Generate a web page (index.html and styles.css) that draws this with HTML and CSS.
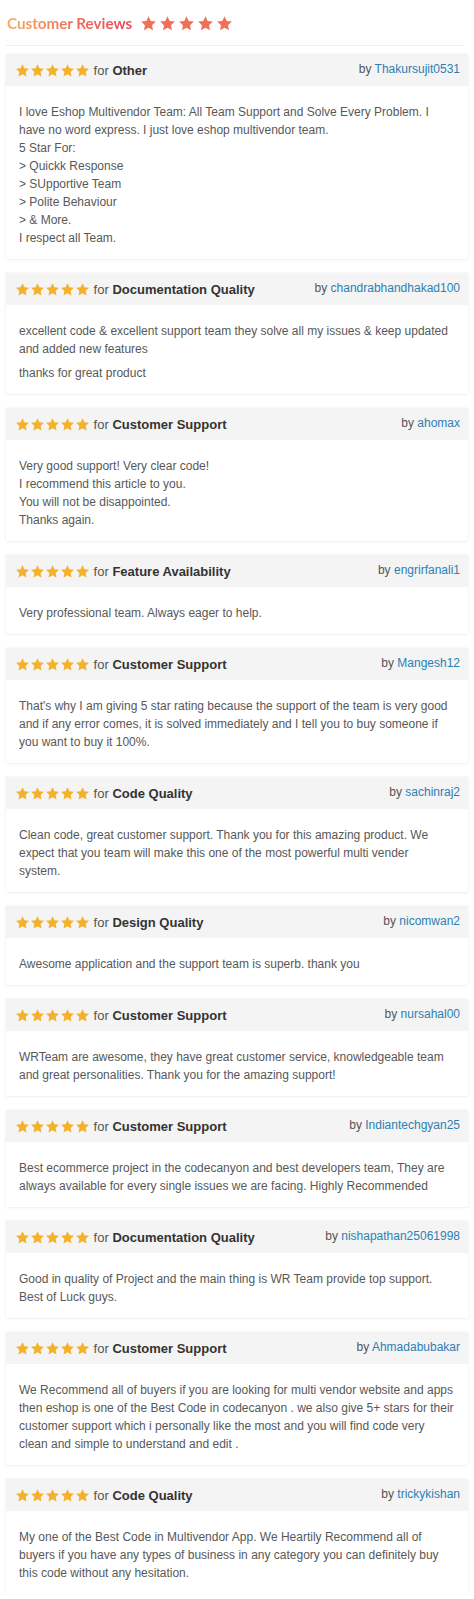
FILE: index.html
```html
<!DOCTYPE html>
<html>
<head>
<meta charset="utf-8">
<link rel="stylesheet" href="styles.css">
</head>
<body>
<svg width="0" height="0" class="defs">
  <defs>
    <symbol id="star" viewBox="0 0 24 24"><path d="M12 1.8l3.1 6.6 7.2.9-5.3 5 1.4 7.1L12 17.9l-6.4 3.5 1.4-7.1-5.3-5 7.2-.9z"/></symbol>
  </defs>
</svg>
<div class="page">
  <div class="title-row">
    <h1 class="title">Customer Reviews</h1>
    <div class="title-stars">
      <svg><use href="#star"/></svg><svg><use href="#star"/></svg><svg><use href="#star"/></svg><svg><use href="#star"/></svg><svg><use href="#star"/></svg>
    </div>
  </div>

  <div class="reviews">
    <div class="card">
      <div class="card-head">
        <div class="rating"><span class="stars"><svg><use href="#star"/></svg><svg><use href="#star"/></svg><svg><use href="#star"/></svg><svg><use href="#star"/></svg><svg><use href="#star"/></svg></span> for <b>Other</b></div>
        <div class="by">by <a>Thakursujit0531</a></div>
      </div>
      <div class="card-body"><p>I love Eshop Multivendor Team: All Team Support and Solve Every Problem. I have no word express. I just love eshop multivendor team.<br>5 Star For:<br>&gt; Quickk Response<br>&gt; SUpportive Team<br>&gt; Polite Behaviour<br>&gt; &amp; More.<br>I respect all Team.</p></div>
    </div>

    <div class="card">
      <div class="card-head">
        <div class="rating"><span class="stars"><svg><use href="#star"/></svg><svg><use href="#star"/></svg><svg><use href="#star"/></svg><svg><use href="#star"/></svg><svg><use href="#star"/></svg></span> for <b>Documentation Quality</b></div>
        <div class="by">by <a>chandrabhandhakad100</a></div>
      </div>
      <div class="card-body"><p>excellent code &amp; excellent support team they solve all my issues &amp; keep updated and added new features</p><p>thanks for great product</p></div>
    </div>

    <div class="card">
      <div class="card-head">
        <div class="rating"><span class="stars"><svg><use href="#star"/></svg><svg><use href="#star"/></svg><svg><use href="#star"/></svg><svg><use href="#star"/></svg><svg><use href="#star"/></svg></span> for <b>Customer Support</b></div>
        <div class="by">by <a>ahomax</a></div>
      </div>
      <div class="card-body"><p>Very good support! Very clear code!<br>I recommend this article to you.<br>You will not be disappointed.<br>Thanks again.</p></div>
    </div>

    <div class="card">
      <div class="card-head">
        <div class="rating"><span class="stars"><svg><use href="#star"/></svg><svg><use href="#star"/></svg><svg><use href="#star"/></svg><svg><use href="#star"/></svg><svg><use href="#star"/></svg></span> for <b>Feature Availability</b></div>
        <div class="by">by <a>engrirfanali1</a></div>
      </div>
      <div class="card-body"><p>Very professional team. Always eager to help.</p></div>
    </div>

    <div class="card">
      <div class="card-head">
        <div class="rating"><span class="stars"><svg><use href="#star"/></svg><svg><use href="#star"/></svg><svg><use href="#star"/></svg><svg><use href="#star"/></svg><svg><use href="#star"/></svg></span> for <b>Customer Support</b></div>
        <div class="by">by <a>Mangesh12</a></div>
      </div>
      <div class="card-body"><p>That's why I am giving 5 star rating because the support of the team is very good and if any error comes, it is solved immediately and I tell you to buy someone if you want to buy it 100%.</p></div>
    </div>

    <div class="card">
      <div class="card-head">
        <div class="rating"><span class="stars"><svg><use href="#star"/></svg><svg><use href="#star"/></svg><svg><use href="#star"/></svg><svg><use href="#star"/></svg><svg><use href="#star"/></svg></span> for <b>Code Quality</b></div>
        <div class="by">by <a>sachinraj2</a></div>
      </div>
      <div class="card-body"><p>Clean code, great customer support. Thank you for this amazing product. We expect that you team will make this one of the most powerful multi vender<br>system.</p></div>
    </div>

    <div class="card">
      <div class="card-head">
        <div class="rating"><span class="stars"><svg><use href="#star"/></svg><svg><use href="#star"/></svg><svg><use href="#star"/></svg><svg><use href="#star"/></svg><svg><use href="#star"/></svg></span> for <b>Design Quality</b></div>
        <div class="by">by <a>nicomwan2</a></div>
      </div>
      <div class="card-body"><p>Awesome application and the support team is superb. thank you</p></div>
    </div>

    <div class="card">
      <div class="card-head">
        <div class="rating"><span class="stars"><svg><use href="#star"/></svg><svg><use href="#star"/></svg><svg><use href="#star"/></svg><svg><use href="#star"/></svg><svg><use href="#star"/></svg></span> for <b>Customer Support</b></div>
        <div class="by">by <a>nursahal00</a></div>
      </div>
      <div class="card-body"><p>WRTeam are awesome, they have great customer service, knowledgeable team and great personalities. Thank you for the amazing support!</p></div>
    </div>

    <div class="card">
      <div class="card-head">
        <div class="rating"><span class="stars"><svg><use href="#star"/></svg><svg><use href="#star"/></svg><svg><use href="#star"/></svg><svg><use href="#star"/></svg><svg><use href="#star"/></svg></span> for <b>Customer Support</b></div>
        <div class="by">by <a>Indiantechgyan25</a></div>
      </div>
      <div class="card-body"><p>Best ecommerce project in the codecanyon and best developers team, They are always available for every single issues we are facing. Highly Recommended</p></div>
    </div>

    <div class="card">
      <div class="card-head">
        <div class="rating"><span class="stars"><svg><use href="#star"/></svg><svg><use href="#star"/></svg><svg><use href="#star"/></svg><svg><use href="#star"/></svg><svg><use href="#star"/></svg></span> for <b>Documentation Quality</b></div>
        <div class="by">by <a>nishapathan25061998</a></div>
      </div>
      <div class="card-body"><p>Good in quality of Project and the main thing is WR Team provide top support. Best of Luck guys.</p></div>
    </div>

    <div class="card">
      <div class="card-head">
        <div class="rating"><span class="stars"><svg><use href="#star"/></svg><svg><use href="#star"/></svg><svg><use href="#star"/></svg><svg><use href="#star"/></svg><svg><use href="#star"/></svg></span> for <b>Customer Support</b></div>
        <div class="by">by <a>Ahmadabubakar</a></div>
      </div>
      <div class="card-body"><p>We Recommend all of buyers if you are looking for multi vendor website and apps then eshop is one of the Best Code in codecanyon . we also give 5+ stars for their customer support which i personally like the most and you will find code very clean and simple to understand and edit .</p></div>
    </div>

    <div class="card">
      <div class="card-head">
        <div class="rating"><span class="stars"><svg><use href="#star"/></svg><svg><use href="#star"/></svg><svg><use href="#star"/></svg><svg><use href="#star"/></svg><svg><use href="#star"/></svg></span> for <b>Code Quality</b></div>
        <div class="by">by <a>trickykishan</a></div>
      </div>
      <div class="card-body"><p>My one of the Best Code in Multivendor App. We Heartily Recommend all of buyers if you have any types of business in any category you can definitely buy this code without any hesitation.</p></div>
    </div>
  </div>
</div>
</body>
</html>
```

FILE: styles.css
```css
* { box-sizing: border-box; }
html, body { margin: 0; padding: 0; background: #ffffff; }
body { font-family: "Liberation Sans", Arial, sans-serif; color: #555; }
.defs { position: absolute; width: 0; height: 0; overflow: hidden; }

.page { padding: 0 6px; }

.title-row {
  display: flex;
  align-items: center;
  height: 46px;
  padding: 1px 0 0 1px;
  border-bottom: 1px solid #efefef;
  margin: 0 4px 0 0;
}
.title {
  margin: 0;
  font-family: Lato, "Open Sans", sans-serif;
  font-weight: 700;
  font-size: 15.2px;
  background: linear-gradient(90deg, #f6ad5c 0%, #f0785a 45%, #e8445b 100%);
  -webkit-background-clip: text;
  background-clip: text;
  color: transparent;
}
.title-stars { display: flex; gap: 2px; margin-left: 8px; }
.title-stars svg { width: 17px; height: 17px; fill: #f17158; }

.reviews { display: flex; flex-direction: column; gap: 14px; padding-top: 8px; }

.card {
  background: #fff;
  box-shadow: 0 0 2px rgba(0,0,0,0.08), 0 1px 3px rgba(0,0,0,0.04);
}
.card-head {
  background: #f4f4f4;
  height: 32px;
  display: flex;
  align-items: center;
  justify-content: space-between;
  padding: 0 8px 0 9px;
}
.rating { display: flex; align-items: center; font-size: 13px; color: #555; white-space: pre; }
.rating b { color: #333; font-weight: 700; }
.stars { display: inline-flex; margin-right: 0; }
.stars svg { width: 15px; height: 15px; fill: #f4b22c; }
.by { font-size: 12px; color: #555; margin-top: -2px; }
.by a { color: #2d7fb3; text-decoration: none; }

.card-body { padding: 17px 13px 12px 13px; font-size: 12px; line-height: 18px; color: #585858; }
.card-body p { margin: 0; }
.card-body p + p { margin-top: 6px; }
```
